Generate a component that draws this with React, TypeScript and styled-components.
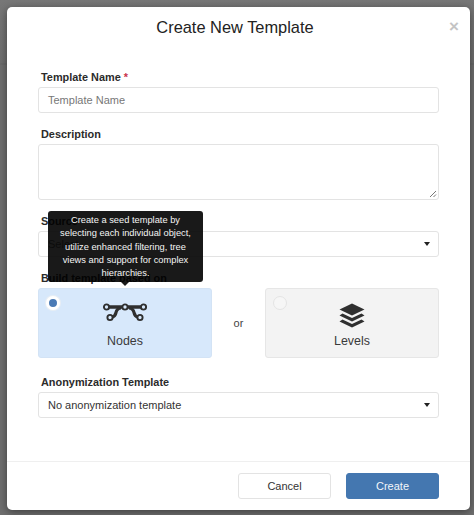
import styled, { createGlobalStyle } from "styled-components";

const GlobalStyle = createGlobalStyle`
  html, body {
    margin: 0;
    padding: 0;
    background: #6e6e6e;
    font-family: "Liberation Sans", Arial, sans-serif;
  }
  * {
    box-sizing: border-box;
  }
`;

const Backdrop = styled.div`
  width: 474px;
  height: 515px;
  overflow: hidden;
  padding: 7px 4px 5px 7px;
  background: linear-gradient(#777 0, #6f6f6f 63px, #666 64px, #6f6f6f 65px);
`;

const Modal = styled.div`
  height: 503px;
  display: flex;
  flex-direction: column;
  background: #fff;
  border-radius: 5px;
  box-shadow: 0 2px 8px rgba(0, 0, 0, 0.45);
`;

const Header = styled.header`
  position: relative;
  height: 40px;
  padding-right: 7px;
  display: flex;
  align-items: center;
  justify-content: center;
`;

const Title = styled.h1`
  margin: 0;
  font-size: 16.4px;
  font-weight: 400;
  color: #222;
`;

const Close = styled.span`
  position: absolute;
  right: 11px;
  top: 10px;
  font-size: 17px;
  line-height: 20px;
  font-weight: 700;
  color: #c4c4c4;
`;

const Body = styled.div`
  flex: 1;
  padding: 21px 31px 0;
`;

const Field = styled.div`
  margin-bottom: 12px;
`;

const Label = styled.label`
  display: block;
  height: 19px;
  padding-left: 3px;
  font-size: 10.9px;
  line-height: 18px;
  font-weight: 700;
  color: #2b2b2b;
`;

const Required = styled.span`
  color: #c9324a;
`;

const TextInput = styled.div`
  height: 26px;
  padding: 0 9px;
  display: flex;
  align-items: center;
  justify-content: space-between;
  background: #fff;
  border: 1px solid #e3e3e3;
  border-radius: 3px;
  font-size: 11px;
  color: #333;
`;

const Placeholder = styled.span`
  color: #777;
`;

const TextArea = styled.div`
  position: relative;
  height: 56px;
  background: #fff;
  border: 1px solid #e3e3e3;
  border-radius: 3px;
`;

const Grip = styled.svg`
  position: absolute;
  right: 1px;
  bottom: 1px;
`;

const Caret = styled.span`
  width: 0;
  height: 0;
  margin-right: -1px;
  border-left: 3.5px solid transparent;
  border-right: 3.5px solid transparent;
  border-top: 4px solid #222;
`;

const BuildField = styled.div`
  position: relative;
  margin-bottom: 15px;
`;

const Tooltip = styled.div`
  position: absolute;
  left: 10px;
  top: -58px;
  width: 155px;
  height: 71px;
  padding: 3px 6px;
  background: rgba(0, 0, 0, 0.9);
  border-radius: 3px;
  color: #f4f4f4;
  font-size: 9.3px;
  line-height: 13.3px;
  text-align: center;

  &::after {
    content: "";
    position: absolute;
    left: 73px;
    bottom: -4px;
    border-left: 4px solid transparent;
    border-right: 4px solid transparent;
    border-top: 4px solid rgba(0, 0, 0, 0.9);
  }
`;

const Choices = styled.div`
  display: flex;
  align-items: center;
`;

const Card = styled.div<{ $selected?: boolean }>`
  position: relative;
  width: 174px;
  height: 70px;
  padding-top: 14px;
  display: flex;
  flex-direction: column;
  align-items: center;
  background: ${({ $selected }) => ($selected ? "#d7e8fb" : "#f3f3f3")};
  border: 1px solid ${({ $selected }) => ($selected ? "#d3e3f5" : "#e6e6e6")};
  border-radius: 3px;
`;

const Radio = styled.span<{ $checked?: boolean }>`
  position: absolute;
  left: 7px;
  top: 7px;
  width: 14px;
  height: 14px;
  background: ${({ $checked }) => ($checked ? "#4a7ab5" : "#f6f6f6")};
  border: ${({ $checked }) => ($checked ? "3px solid #fff" : "1px solid #e4e4e4")};
  border-radius: 50%;
  box-shadow: ${({ $checked }) => ($checked ? "0 0 0 1px #e8eef5" : "none")};
`;

const CardLabel = styled.span`
  margin-top: 5px;
  font-size: 12.4px;
  line-height: 16px;
  color: #3a3a3a;
`;

const Or = styled.span`
  width: 53px;
  text-align: center;
  font-size: 11px;
  color: #444;
`;

const Footer = styled.footer`
  height: 49px;
  padding-top: 11px;
  padding-right: 31px;
  display: flex;
  justify-content: flex-end;
  gap: 15px;
  border-top: 1px solid #efefef;
`;

const Button = styled.button<{ $primary?: boolean }>`
  width: 93px;
  height: 26px;
  padding: 0;
  background: ${({ $primary }) => ($primary ? "#4477b0" : "#fff")};
  border: 1px solid ${({ $primary }) => ($primary ? "#4477b0" : "#e3e3e3")};
  border-radius: 3px;
  color: ${({ $primary }) => ($primary ? "#f2f6fa" : "#333")};
  font-family: inherit;
  font-size: 11px;
`;

const NodesIcon = () => (
  <svg width="44" height="25" viewBox="0 0 44 25" fill="none" stroke="#2f2f2f">
    <path d="M4 4H40" strokeWidth="3.600" />
    <path d="M18 5c-3 .3-4.500 2-5 4.500-.4 2.500-1.500 4-4.500 5" strokeWidth="3.200" />
    <path d="M26 5c3 .3 4.500 2 5 4.500 .4 2.500 1.500 4 4.500 5" strokeWidth="3.200" />
    <circle cx="3.500" cy="4" r="2.600" fill="#d7e8fb" strokeWidth="1.900" />
    <circle cx="22" cy="4" r="2.600" fill="#d7e8fb" strokeWidth="1.900" />
    <circle cx="40.500" cy="4" r="2.600" fill="#d7e8fb" strokeWidth="1.900" />
    <circle cx="7" cy="14.500" r="2.600" fill="#d7e8fb" strokeWidth="1.900" />
    <circle cx="37" cy="14.500" r="2.600" fill="#d7e8fb" strokeWidth="1.900" />
  </svg>
);

const LevelsIcon = () => (
  <svg width="26" height="25" viewBox="0 0 26 25" fill="#2f2f2f">
    <path d="M13 0.500L25.500 6.500 13 12.500 0.500 6.500Z" />
    <path d="M3.500 10.500L13 15 22.500 10.500 25.500 12.500 13 18.500 0.500 12.500Z" />
    <path d="M3.500 16.500L13 21 22.500 16.500 25.500 18.500 13 24.500 0.500 18.500Z" />
  </svg>
);

const App = () => (
  <>
    <GlobalStyle />
    <Backdrop>
      <Modal>
        <Header>
          <Title>Create New Template</Title>
          <Close>×</Close>
        </Header>
        <Body>
          <Field>
            <Label>
              Template Name <Required>*</Required>
            </Label>
            <TextInput>
              <Placeholder>Template Name</Placeholder>
            </TextInput>
          </Field>
          <Field>
            <Label>Description</Label>
            <TextArea>
              <Grip width="8" height="8" viewBox="0 0 8 8" stroke="#777">
                <path d="M1 7L7 1M4.500 7L7 4.500" />
              </Grip>
            </TextArea>
          </Field>
          <Field>
            <Label>Source</Label>
            <TextInput>
              <Placeholder>Select</Placeholder>
              <Caret />
            </TextInput>
          </Field>
          <BuildField>
            <Label>Build template based on</Label>
            <Tooltip>
              Create a seed template by selecting each individual object,
              utilize enhanced filtering, tree views and support for complex
              hierarchies.
            </Tooltip>
            <Choices>
              <Card $selected>
                <Radio $checked />
                <NodesIcon />
                <CardLabel>Nodes</CardLabel>
              </Card>
              <Or>or</Or>
              <Card>
                <Radio />
                <LevelsIcon />
                <CardLabel>Levels</CardLabel>
              </Card>
            </Choices>
          </BuildField>
          <Field>
            <Label>Anonymization Template</Label>
            <TextInput>
              <span>No anonymization template</span>
              <Caret />
            </TextInput>
          </Field>
        </Body>
        <Footer>
          <Button>Cancel</Button>
          <Button $primary>Create</Button>
        </Footer>
      </Modal>
    </Backdrop>
  </>
);

export default App;
